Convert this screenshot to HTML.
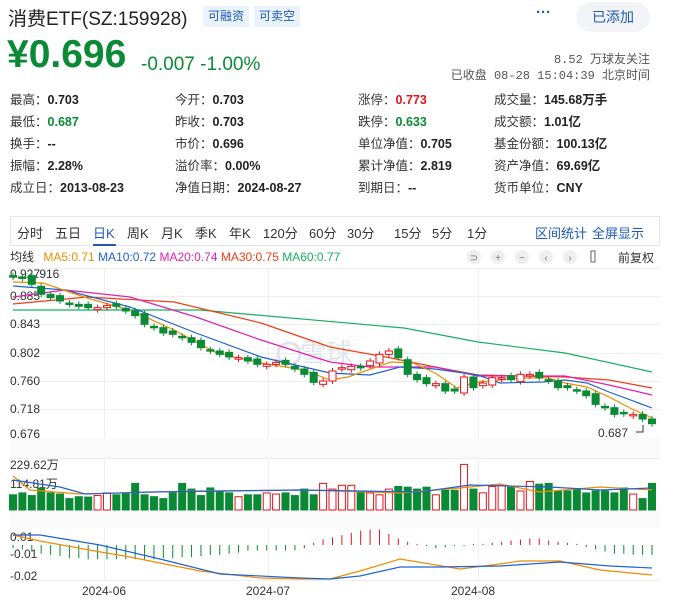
<!DOCTYPE html>
<html><head><meta charset="utf-8">
<style>
*{margin:0;padding:0;box-sizing:border-box}
body{width:673px;height:602px;background:#fff;font-family:"Liberation Sans","Noto Sans CJK SC",sans-serif;color:#333;position:relative;overflow:hidden}
.a{position:absolute;white-space:nowrap}
.tag{position:absolute;top:6px;height:21px;background:#eaf2fb;color:#1d5ab9;font-size:12px;line-height:21px;padding:0 5px}
.row{position:absolute;font-size:12.5px;color:#333}
.row b{font-weight:bold;color:#222}
.g{color:#0a8a35!important}.r{color:#e0141e!important}
.tabs{position:absolute;left:10px;top:216px;width:650px;height:30px;border:1px solid #e6e6e6;font-size:13px;color:#333}
.tabs span{position:absolute;top:6px}
</style></head><body>
<div class="a" style="left:8px;top:4px;font-size:19px;color:#222">消费ETF(SZ:159928)</div>
<div class="tag" style="left:203px">可融资</div>
<div class="tag" style="left:254px">可卖空</div>
<div class="a" style="left:536px;top:4px;font-size:15px;color:#1d5ab9;font-weight:bold">···</div>
<div class="a" style="left:576px;top:2px;width:74px;height:30px;border-radius:15px;background:#f2f4f8;color:#1d5ab9;font-size:14px;line-height:30px;text-align:center">已添加</div>
<div class="a" style="left:7px;top:33px;font-size:39px;font-weight:bold;color:#0a8a35">¥0.696</div>
<div class="a" style="left:141px;top:54px;font-size:19px;color:#0a8a35">-0.007 -1.00%</div>
<div class="a" style="right:23px;top:50px;font-size:12px;color:#555;font-family:'Liberation Mono','Noto Sans CJK SC',monospace">8.52 <span style="font-family:'Noto Sans CJK SC',sans-serif">万球友关注</span></div>
<div class="a" style="right:23px;top:66px;font-size:12px;color:#555;font-family:'Liberation Mono','Noto Sans CJK SC',monospace"><span style="font-family:'Noto Sans CJK SC',sans-serif">已收盘</span> 08-28 15:04:39 <span style="font-family:'Noto Sans CJK SC',sans-serif">北京时间</span></div>

<div class="row" style="left:10px;top:89px">最高：<b>0.703</b></div>
<div class="row" style="left:10px;top:111px">最低：<b class="g">0.687</b></div>
<div class="row" style="left:10px;top:133px">换手：<b>--</b></div>
<div class="row" style="left:10px;top:155px">振幅：<b>2.28%</b></div>
<div class="row" style="left:10px;top:177px">成立日：<b>2013-08-23</b></div>
<div class="row" style="left:175px;top:89px">今开：<b>0.703</b></div>
<div class="row" style="left:175px;top:111px">昨收：<b>0.703</b></div>
<div class="row" style="left:175px;top:133px">市价：<b>0.696</b></div>
<div class="row" style="left:175px;top:155px">溢价率：<b>0.00%</b></div>
<div class="row" style="left:175px;top:177px">净值日期：<b>2024-08-27</b></div>
<div class="row" style="left:358px;top:89px">涨停：<b class="r">0.773</b></div>
<div class="row" style="left:358px;top:111px">跌停：<b class="g">0.633</b></div>
<div class="row" style="left:358px;top:133px">单位净值：<b>0.705</b></div>
<div class="row" style="left:358px;top:155px">累计净值：<b>2.819</b></div>
<div class="row" style="left:358px;top:177px">到期日：<b>--</b></div>
<div class="row" style="left:494px;top:89px">成交量：<b>145.68万手</b></div>
<div class="row" style="left:494px;top:111px">成交额：<b>1.01亿</b></div>
<div class="row" style="left:494px;top:133px">基金份额：<b>100.13亿</b></div>
<div class="row" style="left:494px;top:155px">资产净值：<b>69.69亿</b></div>
<div class="row" style="left:494px;top:177px">货币单位：<b>CNY</b></div>

<div class="tabs">
<span style="left:6px">分时</span><span style="left:44px">五日</span><span style="left:82px;color:#1d5ab9">日K</span>
<div style="position:absolute;left:82px;top:27px;width:23px;height:2px;background:#1d5ab9"></div>
<span style="left:116px">周K</span><span style="left:150px">月K</span><span style="left:184px">季K</span><span style="left:218px">年K</span>
<span style="left:252px">120分</span><span style="left:298px">60分</span><span style="left:336px">30分</span><span style="left:383px">15分</span><span style="left:421px">5分</span><span style="left:456px">1分</span>
<span style="left:524px;color:#1d5ab9">区间统计</span><span style="left:581px;color:#1d5ab9">全屏显示</span>
</div>
<div class="a" style="left:10px;top:248px;font-size:12px;color:#333">均线 <span style="color:#f08c00;margin-left:6px">MA5:0.71</span> <span style="color:#1f62d4">MA10:0.72</span> <span style="color:#e020b0">MA20:0.74</span> <span style="color:#f03c14">MA30:0.75</span> <span style="color:#18b060">MA60:0.77</span></div>
<div class="a" style="left:618px;top:249px;font-size:12px;color:#333">前复权</div>
<div class="a" style="left:10px;top:444px;font-size:12px;color:#333">成交量 145.68万手 <span style="color:#f08c00;margin-left:6px">MA5:87.39万手</span> <span style="color:#1f62d4">MA10:96.05万手</span></div>
<div class="a" style="left:10px;top:512px;font-size:12px;color:#333">MACD (12,26,9) <span style="color:#f08c00;margin-left:6px">DIF:-0.02</span> <span style="color:#1f62d4">DEA:-0.01</span> <span style="color:#0a8a35">MACD:-0.01</span></div>

<svg id="s" class="a" style="left:0;top:0" width="673" height="602" font-family="Liberation Sans, sans-serif">
<g fill="#eee">
<circle cx="474" cy="257" r="7"/><circle cx="498" cy="257" r="7"/><circle cx="522" cy="257" r="7"/><circle cx="546" cy="257" r="7"/><circle cx="570" cy="257" r="7"/>
<circle cx="643" cy="446" r="6"/><circle cx="643" cy="514" r="6"/>
</g>
<g fill="#777" font-size="10" text-anchor="middle"><text x="474" y="261">⊃</text><text x="498" y="261">+</text><text x="522" y="261">−</text><text x="546" y="261">‹</text><text x="570" y="261">›</text><text x="643" y="449" font-size="8">×</text><text x="643" y="517" font-size="8">×</text></g>
<rect x="591" y="251" width="4" height="11" fill="none" stroke="#666"/>
<g stroke="#eee" stroke-width="1">
<line x1="10" y1="268.5" x2="660" y2="268.5"/>
<line x1="10" y1="296.5" x2="660" y2="296.5"/><line x1="10" y1="324.5" x2="660" y2="324.5"/><line x1="10" y1="353.5" x2="660" y2="353.5"/><line x1="10" y1="381.5" x2="660" y2="381.5"/><line x1="10" y1="409.5" x2="660" y2="409.5"/>
<line x1="104.5" y1="268" x2="104.5" y2="580"/><line x1="268.5" y1="268" x2="268.5" y2="580"/><line x1="478.5" y1="268" x2="478.5" y2="580"/>
<line x1="10" y1="440.5" x2="660" y2="440.5"/><line x1="10" y1="458.5" x2="660" y2="458.5"/><line x1="10" y1="510.5" x2="660" y2="510.5"/><line x1="10" y1="580.5" x2="660" y2="580.5"/>
</g>
<rect x="10" y="438" width="650" height="20" fill="#fafafa"/>
<rect x="10" y="508" width="650" height="20" fill="#fafafa"/>
<g fill="#333" font-size="12">
<text x="10" y="278">0.927</text><text x="36" y="278">.916</text><text x="10" y="300">0.885</text><text x="10" y="328">0.843</text><text x="10" y="357">0.802</text><text x="10" y="385">0.760</text><text x="10" y="413">0.718</text><text x="10" y="438">0.676</text>
<text x="598" y="437">0.687</text>
<text x="10" y="469">229.62万</text><text x="10" y="488">114.81万</text>
<text x="10" y="541">0.01</text><text x="10" y="558">-0.01</text><text x="10" y="580">-0.02</text>
<text x="82" y="595">2024-06</text><text x="246" y="595">2024-07</text><text x="451" y="595">2024-08</text>
</g>
<text x="300" y="362" font-size="26" fill="#dfe4ec" font-family="Noto Sans CJK SC">雪球</text>
<circle cx="289" cy="354" r="11" fill="none" stroke="#dfe4ec" stroke-width="3"/>
<polyline fill="none" stroke="#18b060" stroke-width="1.2" points="13,310 200,310 404,328 478,342 565,353 652,372"/>
<polyline fill="none" stroke="#f03c14" stroke-width="1.2" points="13,304 87,297 174,302 261,323 330,347 391,358 435,367 478,375 565,377 609,380 652,388"/>
<polyline fill="none" stroke="#e020b0" stroke-width="1.2" points="13,297 65,290 130,297 196,317 261,340 330,362 370,367 435,367 478,376 565,376 609,385 652,395"/>
<polyline fill="none" stroke="#1f62d4" stroke-width="1.2" points="13,286 65,290 130,307 196,333 261,357 330,373 370,375 400,367 435,369 478,375 500,383 543,382 565,380 587,383 609,392 652,408"/>
<polyline fill="none" stroke="#f08c00" stroke-width="1.2" points="13,282 43,283 87,298 130,310 174,330 217,353 261,363 304,370 330,380 348,377 391,362 413,363 435,373 457,388 478,382 522,378 548,378 565,383 587,387 609,397 630,408 652,418"/>
<polyline fill="none" stroke="#333" stroke-width="1" points="636,432 643,432 643,425"/>
<g id="c"></g>
<polyline fill="none" stroke="#f08c00" stroke-width="1.2" points="13,476 30,490 80,494 200,491 300,490 400,493 460,488 500,484 540,492 600,487 652,490"/>
<polyline fill="none" stroke="#1f62d4" stroke-width="1.2" points="13,480 60,487 85,494 150,492 300,490 420,492 470,485 550,487 600,490 652,488"/>
<polyline fill="none" stroke="#f08c00" stroke-width="1.2" points="13,535 40,541 95,551 130,557 200,571 260,578 300,579 330,579 360,571 400,559 460,569 500,564 520,561 560,561 600,570 652,575"/>
<polyline fill="none" stroke="#1f62d4" stroke-width="1.2" points="13,535 40,535 100,545 160,559 220,574 300,578 330,579 360,576 400,567 440,567 500,566 560,562 610,566 652,568"/>
</svg>
<script>
var cl=[0.916,0.915,0.905,0.89,0.885,0.88,0.875,0.872,0.87,0.87,0.873,0.872,0.865,0.858,0.845,0.84,0.832,0.83,0.825,0.818,0.81,0.805,0.8,0.796,0.795,0.79,0.785,0.785,0.788,0.785,0.778,0.77,0.758,0.76,0.775,0.78,0.782,0.78,0.79,0.8,0.805,0.795,0.77,0.762,0.756,0.756,0.745,0.745,0.766,0.75,0.757,0.765,0.765,0.762,0.77,0.77,0.765,0.76,0.75,0.75,0.745,0.738,0.725,0.72,0.71,0.712,0.71,0.703,0.696];
var vol=[40,45,38,58,45,42,30,35,34,38,45,40,45,70,40,35,30,45,70,55,38,58,50,45,35,40,40,45,42,45,38,55,40,70,55,65,65,50,45,40,55,62,60,55,60,40,52,52,120,55,45,62,65,60,50,75,68,70,50,50,55,45,50,50,45,58,42,30,70];
var h='',n=cl.length,y=function(p){return 353+(0.802-p)*667};
for(var i=0;i<n;i++){var x=13+i*(639/(n-1));var c=cl[i],o=i?cl[i-1]+(i%3-1)*0.003:c+0.002;if(i==n-1)o=0.703;var up=c>=o;var col=up?'#e0141e':'#0a8a35';
var t=y(Math.max(o,c)),b=y(Math.min(o,c));if(b-t<1.5)b=t+1.5;
h+='<line x1="'+x+'" x2="'+x+'" y1="'+(t-3)+'" y2="'+(b+3)+'" stroke="'+col+'"/>';
h+='<rect x="'+(x-3.5)+'" y="'+t+'" width="7" height="'+(b-t)+'" fill="'+(up?'#fff':col)+'" stroke="'+col+'"/>';
var vh=vol[i]*0.38;h+='<rect x="'+(x-3.5)+'" y="'+(510-vh)+'" width="7" height="'+vh+'" fill="'+(up?'#fff':col)+'" stroke="'+col+'"/>';
var m=[ -3,-4,-6,-8,-9,-10,-12,-12,-13,-13,-13,-13,-13,-13,-13,-13,-12,-12,-11,-11,-10,-9,-9,-8,-7,-5,-5,-5,-5,-5,-5,-3,2,5,7,9,11,13,14,14,10,6,3,1,-1,-3,-2,-1,-1,1,1,2,3,4,5,6,6,4,3,2,1,-2,-4,-6,-8,-8,-9,-9,-9][i]||0;
var mc=m>0?'#e0141e':'#0a8a35';h+='<line x1="'+x+'" x2="'+x+'" y1="545" y2="'+(545-m*1.1)+'" stroke="'+mc+'"/>';}
document.getElementById('c').innerHTML=h;
</script>
</body></html>
